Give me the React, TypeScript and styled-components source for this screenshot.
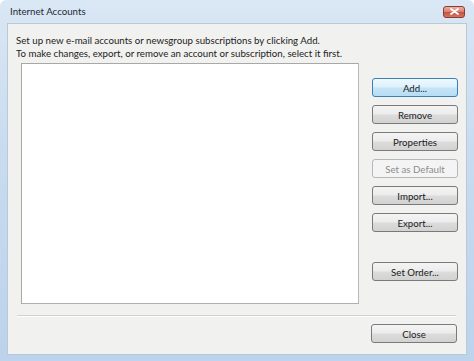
import styled, { createGlobalStyle, css } from "styled-components";

const Global = createGlobalStyle`
  html, body {
    margin: 0;
    padding: 0;
    background: #ffffff;
  }
  * {
    box-sizing: border-box;
  }
`;

const Frame = styled.div`
  width: 474px;
  height: 361px;
  display: flex;
  flex-direction: column;
  padding: 0 7px 6px 7px;
  background: linear-gradient(180deg, #dae7f4 0%, #c9dcef 40%, #bcd3eb 100%);
  border-radius: 6px 6px 0 0;
  font-family: Lato, "Open Sans", sans-serif;
  font-size: 9.7px;
  color: #222222;
`;

const TitleBar = styled.div`
  height: 23px;
  display: flex;
  align-items: center;
  justify-content: space-between;
  padding: 0 2px 2px 3px;
`;

const Title = styled.span`
  color: #1e2a36;
`;

const CloseX = styled.div`
  width: 22px;
  height: 12px;
  margin-top: 2px;
  border: 1px solid #8a3b36;
  border-radius: 3px;
  background: linear-gradient(180deg, #eab0a4 0%, #da8272 45%, #c65442 55%, #d47462 100%);
  display: flex;
  align-items: center;
  justify-content: center;
`;

const Client = styled.div`
  flex: 1;
  display: flex;
  flex-direction: column;
  background: #f1f1ef;
  border: 1px solid #b8c9db;
  padding: 10px 8px 0 8px;
`;

const Intro = styled.div`
  line-height: 13px;
`;

const MainRow = styled.div`
  display: flex;
  margin-top: 3px;
  padding-left: 5px;
`;

const ListBox = styled.div`
  width: 339px;
  height: 241px;
  background: #ffffff;
  border: 1px solid #a8a8a8;
  border-right-color: #b8b8b8;
  border-bottom-color: #b0b0b0;
`;

const ButtonColumn = styled.div`
  display: flex;
  flex-direction: column;
  gap: 8px;
  margin: 15px 0 0 13px;
`;

const Button = styled.div<{ $variant?: "default" | "disabled"; $gapTop?: number }>`
  width: 86px;
  height: 19px;
  display: flex;
  align-items: center;
  justify-content: center;
  border-radius: 3px;
  border: 1px solid #7a7a7a;
  background: linear-gradient(180deg, #f4f4f4 0%, #ececec 48%, #dcdcdc 52%, #d2d2d2 100%);
  color: #1b1b1b;
  ${(p) => p.$gapTop && css`margin-top: ${p.$gapTop}px;`}
  ${(p) =>
    p.$variant === "default" &&
    css`
      border-color: #3c7fb1;
      background: linear-gradient(180deg, #eef8fe 0%, #dcf0fc 48%, #c4e5f8 52%, #b6ddf4 100%);
    `}
  ${(p) =>
    p.$variant === "disabled" &&
    css`
      border-color: #b4b8bb;
      background: #f4f4f4;
      color: #8c8c8c;
    `}
`;

const Separator = styled.div`
  margin: 11px 2px 0 1px;
  height: 2px;
  border-top: 1px solid #d0d0d0;
  border-bottom: 1px solid #ffffff;
`;

const Footer = styled.div`
  display: flex;
  justify-content: flex-end;
  padding: 7px 1px 0 0;
`;

export default function App() {
  return (
    <>
      <Global />
      <Frame>
        <TitleBar>
          <Title>Internet Accounts</Title>
          <CloseX>
            <svg width="9" height="7" viewBox="0 0 9 7">
              <path d="M1 1 L8 6 M8 1 L1 6" stroke="#ffffff" strokeWidth="1.8" strokeLinecap="round" />
            </svg>
          </CloseX>
        </TitleBar>
        <Client>
          <Intro>
            Set up new e-mail accounts or newsgroup subscriptions by clicking Add.
            <br />
            To make changes, export, or remove an account or subscription, select it first.
          </Intro>
          <MainRow>
            <ListBox />
            <ButtonColumn>
              <Button $variant="default">Add...</Button>
              <Button>Remove</Button>
              <Button>Properties</Button>
              <Button $variant="disabled">Set as Default</Button>
              <Button>Import...</Button>
              <Button>Export...</Button>
              <Button $gapTop={22}>Set Order...</Button>
            </ButtonColumn>
          </MainRow>
          <Separator />
          <Footer>
            <Button>Close</Button>
          </Footer>
        </Client>
      </Frame>
    </>
  );
}
